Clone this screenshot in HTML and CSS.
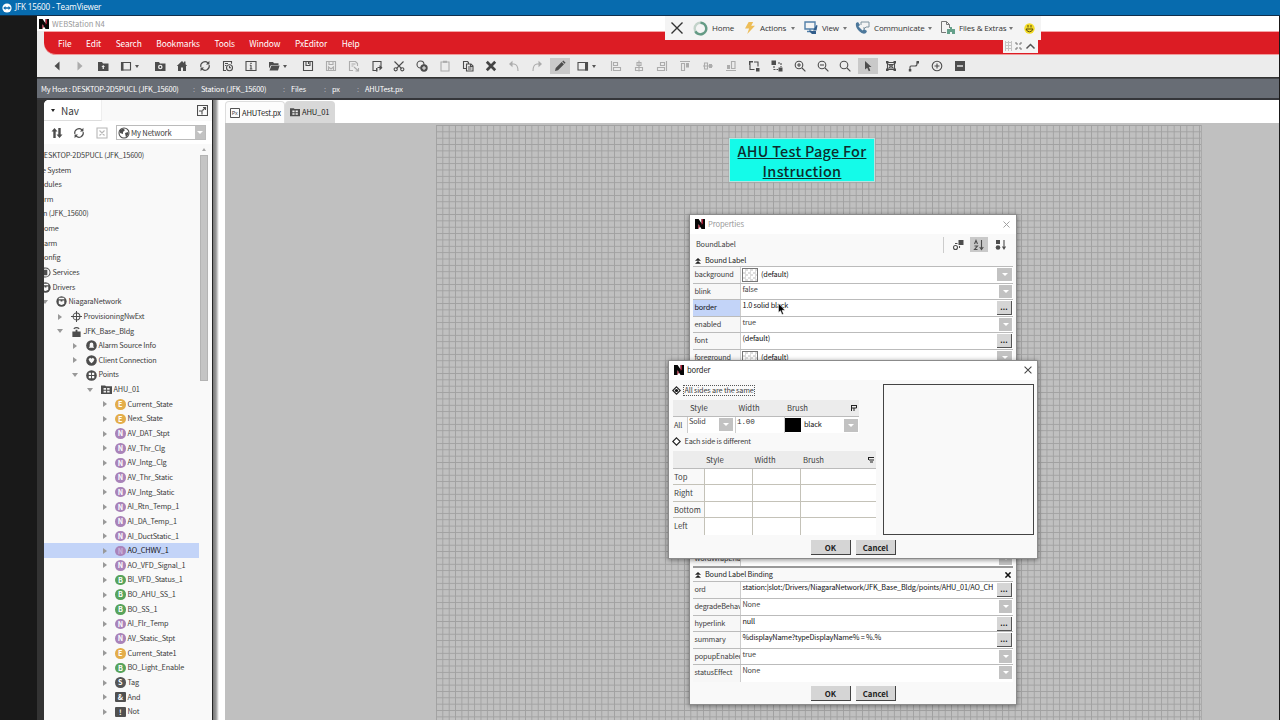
FILE: index.html
```html
<!DOCTYPE html>
<html lang="en">
<head>
    <meta charset="UTF-8">
    <meta name="viewport" content="width=device-width, initial-scale=1.0">
    <title>JFK 15600 - TeamViewer</title>
    <link rel="stylesheet" href="styles.css">
</head>
<body>

    <!-- shared icon shapes -->
    <svg class="sprites">
        <symbol id="n-logo" viewBox="0 0 10 10"><path fill="#080808" d="M0 0h3.6l3 4.6V0H10v10H6.6L3.4 5.2V10H0z"/><path fill="#a3142c" d="M6.6 0H8v4.5L6.6 6zM3.4 5.2 5 7.6 3.4 10z"/></symbol>
        <symbol id="folder-up" viewBox="0 0 12 12"><path d="M1 2h4l1 1.5h5.5V11H1z"/><path fill="#ececec" d="M6.2 5 4.4 7h1.2v2h1.3V7H8z"/></symbol>
        <symbol id="folder-dev" viewBox="0 0 12 12"><path d="M0 1.500h4.500l1 1H12V11H0z"/><path fill="#eee" d="M2.800 4.300h2.700v2H2.800zM6.700 4.300h2.700v2H6.700zM2.800 7.400h2.700v2H2.800zM6.700 7.400h2.700v2H6.700z"/></symbol>
        <symbol id="refresh" viewBox="0 0 12 12"><path class="line" d="M1.8 7A4.3 4.3 0 0 1 9 3M10.2 5A4.3 4.3 0 0 1 3 9"/><path d="M10.4.8v3.6H7zM1.6 11.2V7.6H5z"/></symbol>
        <symbol id="save" viewBox="0 0 12 12"><path class="line" d="M1.5 1.5h9v9h-9zM4 1.5v4h4v-4M6.5 2v2"/></symbol>
        <symbol id="zoom-g" viewBox="0 0 12 12"><circle class="line" cx="5" cy="5" r="3.8"/><path class="line" d="m8 8 3.4 3.4"/></symbol>
        <symbol id="i-net" viewBox="0 0 12 12"><circle cx="6" cy="6" r="5.6"/><path fill="#f9f9f9" d="M3 5h2v1h2V5h2v3.5Q6 11 3 8.5zM3.5 2h5l1 1.5h-7z"/></symbol>
        <symbol id="i-grid" viewBox="0 0 12 12"><circle cx="6" cy="6" r="5.8"/><path fill="#f9f9f9" d="M3 3h2.5v2.5H3zM6.500 3H9v2.500H6.500zM3 6.500h2.500V9H3zM6.500 6.500H9V9H6.500z"/></symbol>
    </svg>

    <div class="titlebar">
        <svg width="10" height="10" viewBox="0 0 10 10"><circle cx="5" cy="5" r="4.6" fill="#fff"/><path fill="#0a6ab0" d="M1.2 5 3.5 3v1.3h3V3l2.3 2-2.3 2V5.7h-3V7z"/></svg>
        <span>JFK 15600 - TeamViewer</span>
    </div>

    <div class="remote">
        <div class="app-title"><svg width="10" height="10"><use href="#n-logo"/></svg><span>WEBStation N4</span></div>
        <div class="menu-wrap">
            <div class="menu">
                <span>File</span><span>Edit</span><span>Search</span><span>Bookmarks</span><span>Tools</span><span>Window</span><span>PxEditor</span><span>Help</span>
            </div>
        </div>

        <div class="toolbar">
            <div class="tool"><svg viewBox="0 0 12 12"><path d="M8.5 1.5v9L3.5 6z"/></svg></div>
            <div class="tool off"><svg viewBox="0 0 12 12"><path d="M3.5 1.5v9L8.5 6z"/></svg></div>
            <div class="tool"><svg><use href="#folder-up"/></svg></div>
            <div class="tool drop"><svg viewBox="0 0 12 12"><path class="line" d="M1.5 2.5h9V10h-9z"/><path d="M1 2h2.5v8.5H1z"/></svg></div>
            <div class="tool"><svg viewBox="0 0 12 12"><path d="M1 2h4l1 1.500h5.500V11H1z"/><circle cx="6.3" cy="7" r="2.3" fill="#ececec"/><path d="M5.5 6h1.600v2H5.500z"/></svg></div>
            <div class="tool"><svg viewBox="0 0 12 12"><path d="M6 1 .8 6H2v5h3V7.500h2V11h3V6h1.200L9.500 4.300V1.500H8v1.400z"/></svg></div>
            <div class="tool"><svg><use href="#refresh"/></svg></div>
            <div class="tool"><svg viewBox="0 0 12 12"><path class="line" d="M4 10.500H1.500v-9h8v2.200M3 3.500h3M3 5.500h1.500"/><circle class="line" cx="7.5" cy="7.7" r="3"/><path class="line" d="M7.500 6v1.800H9"/></svg></div>
            <div class="tool"><svg viewBox="0 0 12 12"><path class="line" d="M1 1.500h10v9H1zM6 5v4M4.800 9h2.500M4.800 5.300H6"/><path d="M5.300 2.700h1.400V4H5.300z"/></svg></div>
            <div class="tool drop"><svg viewBox="0 0 12 12"><path d="M1 2h4l1 1.200h4.500V5H3L1 8.500zM3.400 5.600h8.200L10 10.500H1.500z"/></svg></div>
            <div class="tool"><svg><use href="#save"/></svg></div>
            <div class="tool off"><svg viewBox="0 0 12 12"><path class="line" d="M1.500 1.500h9v9h-9zM4 1.500v3h4v-3M3.500 10V7l2.500 2 2.500-2v3"/></svg></div>
            <div class="tool off"><svg viewBox="0 0 12 12"><path class="line" d="M5 10.500H1.500v-9h6l2 2V6M3.500 4h4M3.500 6h2M6 7l4.500 4M10.500 8v3H7.500"/></svg></div>
            <div class="tool"><svg viewBox="0 0 12 12"><path class="line" d="M5 10.500H2v-9h8v6H6.500"/><path d="m8.500 5 3 2.700-3 2.800zM5 8h1.500v3.500H5z"/></svg></div>
            <div class="tool"><svg viewBox="0 0 12 12"><path class="line" d="m1.500 1.500 7 7M10.500 1.500l-7 7"/><circle class="line" cx="2.7" cy="9.3" r="1.6"/><circle class="line" cx="9.3" cy="9.3" r="1.6"/></svg></div>
            <div class="tool"><svg viewBox="0 0 12 12"><circle class="line" cx="4.5" cy="4.5" r="3.5"/><circle cx="8" cy="8" r="3.7"/><path stroke="#ececec" d="M8 6v4M6 8h4"/></svg></div>
            <div class="tool off"><svg viewBox="0 0 12 12"><path class="line" d="M2 2h8v9H2z"/><path d="M4 .8h4v2H4z"/></svg></div>
            <div class="tool"><svg viewBox="0 0 12 12"><path class="line" d="M4 8.500H1.500v-7h4l1 1v1.500M4.500 4H9l2 2v5H4.500zM6 7h3.500M6 9h3.500M8.500 4v2.500H11"/></svg></div>
            <div class="tool"><svg viewBox="0 0 12 12"><path stroke="#444" stroke-width="2.7" d="m1.800 1.800 8.400 8.400M10.200 1.800l-8.400 8.400"/></svg></div>
            <div class="tool off"><svg viewBox="0 0 12 12"><path class="line" d="M2 4h4q4 .5 4 7"/><path d="M4.500.8v6.400L1 4z"/></svg></div>
            <div class="tool off"><svg viewBox="0 0 12 12"><path class="line" d="M10 4H6q-4 .5-4 7"/><path d="M7.500.8v6.400L11 4z"/></svg></div>
            <div class="tool active"><svg viewBox="0 0 12 12"><path d="m1 11 .7-3 6-6L10 4.300l-6 6zM8.300 1.500l1-1 2.300 2.300-1 1z"/></svg></div>
            <div class="tool drop"><svg viewBox="0 0 12 12"><path class="line" d="M1 2.500h9.500V10H1z"/><path d="M8 2h3v8.500H8z"/></svg></div>
            <div class="tool off"><svg viewBox="0 0 12 12"><path class="line" d="M1.500 1v10M3.500 2.500h4v3h-4zM3.500 7.500h7v3h-7z"/></svg></div>
            <div class="tool off"><svg viewBox="0 0 12 12"><path class="line" d="M6 .5v11M4 2.500h4v3H4zM2.500 7.500h7v3h-7z"/></svg></div>
            <div class="tool off"><svg viewBox="0 0 12 12"><path class="line" d="M10.500 1v10M4.500 2.500h4v3h-4zM1.500 7.500h7v3h-7z"/></svg></div>
            <div class="tool off"><svg viewBox="0 0 12 12"><path class="line" d="M1 1.500h10M2.500 3.500h3v7h-3z"/><path d="M7 3h3v4.500H7z"/></svg></div>
            <div class="tool off"><svg viewBox="0 0 12 12"><path class="line" d="M1 6h10M2.500 3h3v6h-3z"/><path d="M7 4h3v4H7z"/></svg></div>
            <div class="tool off"><svg viewBox="0 0 12 12"><path class="line" d="M1 10.500h10M6.500 1.500H10v7H6.500z"/><path d="M2 5h3v4H2z"/></svg></div>
            <div class="tool"><svg viewBox="0 0 12 12"><path d="M1 1h4v1.500H2.500V5H1zM8 8h3.500v3.500H8z"/><path class="line" d="M2 5v4.500h4.500M6 2h4v4.500"/></svg></div>
            <div class="tool"><svg viewBox="0 0 12 12"><path d="M.5.500h4.500V5H.5zM7.500 7.500h4v4h-4z"/><path class="line" d="M3 6v3.500h4M7 3h3v4" stroke-dasharray="2 1"/></svg></div>
            <div class="tool"><svg viewBox="0 0 12 12"><use href="#zoom-g"/><path class="line" d="M5 3v4M3 5h4"/></svg></div>
            <div class="tool"><svg viewBox="0 0 12 12"><use href="#zoom-g"/><path class="line" d="M3 5h4"/></svg></div>
            <div class="tool"><svg><use href="#zoom-g"/></svg></div>
            <div class="tool active"><svg viewBox="0 0 12 12"><path d="m3 1 6.500 6H6.800l1.500 3.500-1.500.7L5.200 7.800 3 9.500z"/></svg></div>
            <div class="tool"><svg viewBox="0 0 12 12"><path class="line" d="M2.500 2.500h7v7h-7zM4 4.500h4L6.500 6 8 8H4l1.500-2z"/><path d="M1 1h2.500v2.500H1zM8.500 1H11v2.500H8.500zM1 8.500h2.500V11H1zM8.500 8.500H11V11H8.500z"/></svg></div>
            <div class="tool"><svg viewBox="0 0 12 12"><path class="line" d="M2 10V7q0-1 1-1h4q2 0 2-2V2.500"/><path d="M.8 9h2.500v2.500H.8zM8.500 1H11v2.500H8.500z"/></svg></div>
            <div class="tool"><svg viewBox="0 0 12 12"><circle class="line" cx="6" cy="6" r="4.8"/><path class="line" d="M6 3.500v5M3.500 6h5"/></svg></div>
            <div class="tool"><svg viewBox="0 0 12 12"><path d="M1 1h10v10H1z"/><path stroke="#ececec" stroke-width="1.4" d="M3 6h6"/></svg></div>
        </div>

        <div class="pathbar">
            <span class="host">My Host : DESKTOP-2D5PUCL (JFK_15600)</span><i>:</i><span class="station">Station (JFK_15600)</span><i>:</i><span class="files">Files</span><i>:</i><span class="px">px</span><i>:</i><span>AHUTest.px</span>
        </div>

        <div class="workspace">
            <div class="nav">
                <div class="nav-head">
                    <div class="nav-tab"><b class="caret dark"></b>Nav</div>
                    <svg width="11" height="11" viewBox="0 0 11 11"><path class="line" d="M.5.5h10v10H.5zM6 2.500h2.500V5M8.500 2.500l-3 3M2 6h3v3.500"/></svg>
                </div>
                <div class="nav-tools">
                    <svg viewBox="0 0 12 12"><path d="M3.500 1 6.500 4.500H4.700V11H2.300V4.500H.5zM8.500 11l3-3.500H9.700V1H7.300v6.500H5.500z"/></svg>
                    <svg class="nav-refresh"><use href="#refresh"/></svg>
                    <svg class="off nav-close" viewBox="0 0 12 12"><path class="line" d="M1 1h10v10H1zM3.500 3.500l5 5M8.500 3.500l-5 5"/></svg>
                    <div class="select"><svg viewBox="0 0 12 12"><circle class="line" cx="6" cy="6" r="5"/><path d="M2 3 5 1.500 7 3 5 5v2L2 6zM7 6l3-1 .5 2L8 10.500z"/></svg><span>My Network</span><div class="arrow"></div></div>
                </div>
                <div class="tree-wrap">
                    <div class="tree">
                        <div class="row cut c1">DESKTOP-2D5PUCL (JFK_15600)</div>
                        <div class="row cut c2">e System</div>
                        <div class="row cut c3">dules</div>
                        <div class="row cut c4">rm</div>
                        <div class="row cut c5">n (JFK_15600)</div>
                        <div class="row cut c6">ome</div>
                        <div class="row cut c7">arm</div>
                        <div class="row cut c8">onfig</div>
                        <div class="row l0"><svg viewBox="0 0 12 12"><circle class="line" cx="6" cy="6" r="5"/><path d="M4 3h4v6H4z"/></svg>Services</div>
                        <div class="row l0"><svg><use href="#i-net"/></svg>Drivers</div>
                        <div class="row l1"><b class="open"></b><svg><use href="#i-net"/></svg>NiagaraNetwork</div>
                        <div class="row l2"><b></b><svg viewBox="0 0 12 12"><circle class="line" cx="6" cy="6" r="3.7"/><path class="line" d="M6 0v12M0 6h12"/></svg>ProvisioningNwExt</div>
                        <div class="row l2"><b class="open"></b><svg viewBox="0 0 12 12"><path d="M1.500 6h9v6h-9zM5 4h2v2H5z"/><path class="line" d="M3 3q3-2.500 6 0"/></svg>JFK_Base_Bldg</div>
                        <div class="row l3"><b></b><svg viewBox="0 0 12 12"><circle cx="6" cy="6" r="5.8"/><path fill="#f9f9f9" d="M3 8.500 4 7V5q0-2.200 2-2.200T8 5v2l1 1.500z"/></svg>Alarm Source Info</div>
                        <div class="row l3"><b></b><svg viewBox="0 0 12 12"><circle cx="6" cy="6" r="5.8"/><path fill="#f9f9f9" d="M2.800 4.500 4.500 3 6 4l1.500-1 1.700 1.500L8 7 6 9 4 7z"/></svg>Client Connection</div>
                        <div class="row l3"><b class="open"></b><svg><use href="#i-grid"/></svg>Points</div>
                        <div class="row l4"><b class="open"></b><svg><use href="#folder-dev"/></svg>AHU_01</div>
                        <div class="row l5"><b></b><em class="e">E</em>Current_State</div>
                        <div class="row l5"><b></b><em class="e">E</em>Next_State</div>
                        <div class="row l5"><b></b><em class="n">N</em>AV_DAT_Stpt</div>
                        <div class="row l5"><b></b><em class="n">N</em>AV_Thr_Clg</div>
                        <div class="row l5"><b></b><em class="n">N</em>AV_Intg_Clg</div>
                        <div class="row l5"><b></b><em class="n">N</em>AV_Thr_Static</div>
                        <div class="row l5"><b></b><em class="n">N</em>AV_Intg_Static</div>
                        <div class="row l5"><b></b><em class="n">N</em>AI_Rtn_Temp_1</div>
                        <div class="row l5"><b></b><em class="n">N</em>AI_DA_Temp_1</div>
                        <div class="row l5"><b></b><em class="n">N</em>AI_DuctStatic_1</div>
                        <div class="row l5 selected"><b></b><em class="n">N</em>AO_CHWV_1</div>
                        <div class="row l5"><b></b><em class="n">N</em>AO_VFD_Signal_1</div>
                        <div class="row l5"><b></b><em class="b">B</em>BI_VFD_Status_1</div>
                        <div class="row l5"><b></b><em class="b">B</em>BO_AHU_SS_1</div>
                        <div class="row l5"><b></b><em class="b">B</em>BO_SS_1</div>
                        <div class="row l5"><b></b><em class="n">N</em>AI_Flr_Temp</div>
                        <div class="row l5"><b></b><em class="n">N</em>AV_Static_Stpt</div>
                        <div class="row l5"><b></b><em class="e">E</em>Current_State1</div>
                        <div class="row l5"><b></b><em class="b">B</em>BO_Light_Enable</div>
                        <div class="row l5"><b></b><em class="s">S</em>Tag</div>
                        <div class="row l5"><b></b><em class="sq">&amp;</em>And</div>
                        <div class="row l5"><b></b><em class="sq">!</em>Not</div>
                    </div>
                    <div class="scroll"><div class="up"></div><div class="thumb"></div></div>
                </div>
            </div>

            <div class="splitter"></div>

            <div class="editor">
                <div class="tabs">
                    <div class="tab current"><svg viewBox="0 0 11 11"><path class="line" d="M.5.5h10v10H.5z"/><text x="2" y="7.500">Px</text></svg>AHUTest.px</div>
                    <div class="tab"><svg><use href="#folder-dev"/></svg>AHU_01</div>
                </div>
                <div class="canvas">
                    <div class="page"></div>
                </div>
            </div>
        </div>
    </div>

    <!-- label placed on the px page -->
    <div class="px-label">AHU Test Page For<br>Instruction</div>

    <!-- TeamViewer toolbar -->
    <div class="tv-bar">
        <div class="tv-item close"><svg width="12" height="12" viewBox="0 0 12 12"><path stroke="#333" stroke-width="1.4" d="m.5.5 11 11M11.500.5l-11 11"/></svg></div>
        <div class="tv-item home"><svg width="15" height="15" viewBox="0 0 16 16"><g fill="none" stroke-width="2.6"><circle cx="8" cy="8" r="6.2" stroke="#c3d3ca"/><path stroke="#649b85" d="M8 1.800A6.200 6.200 0 1 1 2.500 11"/></g></svg><span>Home</span></div>
        <div class="tv-item actions"><svg width="10" height="12" viewBox="0 0 11 13"><path fill="#edbd58" d="M4 0h5L6.800 4H11L2.500 13l2-6H0z"/></svg><span>Actions</span><b class="caret"></b></div>
        <div class="tv-item view"><svg width="14" height="14" viewBox="0 0 14 14"><path fill="none" stroke="#527fa8" stroke-width="1.4" d="M1 1h10v7H1zM6 8v2M3 10.500h5"/><path fill="#315d8b" d="m12.500 4 1 .5-1 5H9zM5 10h7v3H8z"/></svg><span>View</span><b class="caret"></b></div>
        <div class="tv-item communicate"><svg width="15" height="14" viewBox="0 0 15 14"><path fill="none" stroke="#7f929e" d="M6 4V1h8v5h-3l-2 2V6"/><path fill="#4d789b" d="M1 2 3 1l2 3-1.500 1.500 4 4L9 8l3 2-1 2q-3 2-7-2T1 2z"/></svg><span>Communicate</span><b class="caret"></b></div>
        <div class="tv-item files-extras"><svg width="16" height="14" viewBox="0 0 16 14"><path fill="none" stroke="#777" d="M6 11.500H1.500V.5h5l3 3V7M6.500.5v3h3"/><path fill="#65a08a" d="M7 8h3V6h2v2h3v5h-3v-2h-2v2H7z"/></svg><span>Files &amp; Extras</span><b class="caret"></b></div>
        <svg width="11" height="11" viewBox="0 0 11 11"><circle cx="5.5" cy="5.5" r="5.2" fill="#f3dc25"/><path stroke="#594c10" d="M4 2v2.500M7 2v2.500"/><path fill="none" stroke="#594c10" d="M2 6h7q-1 2.800-3.500 2.800T2 6z"/></svg>
    </div>
    <div class="tv-handle">
        <svg width="35" height="13" viewBox="0 0 35 13"><path stroke="#c4c4c4" d="M2 2.500h7M2 5.500h7M2 8.500h7M2.500 1v10M5.500 1v10M8.500 1v10"/><path fill="none" stroke="#777" d="M12 3h2v2M12 9h2V7M19 3h-2v2M19 9h-2V7"/><path fill="none" stroke="#555" stroke-width="1.5" d="m23.500 8.500 4-4 4 4"/></svg>
    </div>

    <div class="dialog properties">
        <div class="dialog-title faded"><svg width="10" height="10"><use href="#n-logo"/></svg><span>Properties</span><svg class="x" width="7" height="7" viewBox="0 0 7 7"><path d="m.5.5 6 6M6.500.5l-6 6"/></svg></div>
        <div class="props-head">
            <span>BoundLabel</span>
            <div class="props-tools">
                <div class="ptool"><svg viewBox="0 0 12 12"><path d="M6.500 1h5v5h-5z"/><circle class="line" cx="3.5" cy="8.5" r="2"/><path class="line" d="M3 4.500h2.500M7.500 7v2"/></svg></div>
                <div class="ptool active"><svg viewBox="0 0 12 12"><path class="line" d="M1.500 5 3 1.500 4.500 5M1.500 7h3l-3 3.500h3M8.500 1v9M6.700 8l1.800 2.500L10.300 8"/></svg></div>
                <div class="ptool"><svg viewBox="0 0 12 12"><path d="M1 1h4v4H1z"/><circle cx="3" cy="8.5" r="2.3"/><path class="line" d="M9 1v8M7.500 7.500 9 10l1.500-2.500"/></svg></div>
            </div>
        </div>
        <div class="section"><svg width="6" height="6" viewBox="0 0 6 6"><path d="m0 2.800 3-2.800 3 2.800zM0 5.800 3 3l3 2.800z"/></svg><span>Bound Label</span></div>
        <div class="props">
            <div class="prop mid"><label>background</label><div class="value"><i class="swatch"></i>(default)</div><div class="arrow wide"></div></div>
            <div class="prop soft"><label>blink</label><div class="value">false</div><div class="arrow"></div></div>
            <div class="prop picked"><label>border</label><div class="value">1.0 solid black</div><div class="dots">...</div></div>
            <div class="prop soft"><label>enabled</label><div class="value">true</div><div class="arrow"></div></div>
            <div class="prop"><label>font</label><div class="value">(default)</div><div class="dots">...</div></div>
            <div class="prop mid"><label>foreground</label><div class="value"><i class="swatch"></i>(default)</div><div class="arrow wide"></div></div>
        </div>
        <div class="props-rest">
            <div class="prop soft"><label>wordWrapEna</label><div class="value"></div><div class="arrow"></div></div>
        </div>
        <div class="section second"><svg width="6" height="6" viewBox="0 0 6 6"><path d="m0 2.800 3-2.800 3 2.800zM0 5.800 3 3l3 2.800z"/></svg><span>Bound Label Binding</span><svg class="x bold" width="6" height="6" viewBox="0 0 7 7"><path d="m.5.5 6 6M6.500.5l-6 6"/></svg></div>
        <div class="props">
            <div class="prop"><label>ord</label><div class="value">station:|slot:/Drivers/NiagaraNetwork/JFK_Base_Bldg/points/AHU_01/AO_CH</div><div class="dots">...</div></div>
            <div class="prop soft"><label>degradeBehav</label><div class="value">None</div><div class="arrow"></div></div>
            <div class="prop"><label>hyperlink</label><div class="value">null</div><div class="dots">...</div></div>
            <div class="prop"><label>summary</label><div class="value">%displayName?typeDisplayName% = %.%</div><div class="dots">...</div></div>
            <div class="prop soft"><label>popupEnabled</label><div class="value">true</div><div class="arrow"></div></div>
            <div class="prop soft"><label>statusEffect</label><div class="value">None</div><div class="arrow"></div></div>
        </div>
        <div class="buttons"><button>OK</button><button>Cancel</button></div>
    </div>

    <svg class="pointer" width="8" height="12" viewBox="0 0 8 12"><path stroke="#fff" stroke-width=".5" d="M.5.5v9l2-1.800L4 11.500l1.500-.6L4 7.300h3z"/></svg>

    <div class="dialog border-dialog">
        <div class="dialog-title"><svg width="10" height="10"><use href="#n-logo"/></svg><span>border</span><svg class="x" width="8" height="8" viewBox="0 0 7 7"><path d="m.5.5 6 6M6.500.5l-6 6"/></svg></div>
        <div class="border-body">
            <div class="form">
                <div class="radio"><svg width="9" height="9" viewBox="0 0 8 8"><path fill="#fff" stroke="#222" d="m4 .7 3.300 3.300L4 7.300.7 4z"/><circle cx="4" cy="4" r="1.4" fill="#111"/></svg><span class="focus">All sides are the same</span></div>
                <div class="grid-head one"><span>Style</span><span>Width</span><span>Brush</span><svg width="6" height="6" viewBox="0 0 6 6"><path fill="none" stroke="#222" d="M0 .5h6M.5 0v6M0 3h5.500V1M3 3v3"/></svg></div>
                <div class="all-row"><span>All</span><div class="cell style">Solid<div class="arrow wide"></div></div><div class="cell width">1.00</div><div class="cell brush"><i></i>black<div class="arrow wide"></div></div></div>
                <div class="radio each"><svg width="9" height="9" viewBox="0 0 8 8"><path fill="#fff" stroke="#222" d="m4 .7 3.300 3.300L4 7.300.7 4z"/></svg><span>Each side is different</span></div>
                <div class="grid-head two"><span>Style</span><span>Width</span><span>Brush</span><svg width="6" height="6" viewBox="0 0 6 6"><path fill="none" stroke="#222" d="M0 .5h6M1 3h5M.5 0v3M2 5h3"/></svg></div>
                <div class="side"><span>Top</span><i></i><i></i><i></i></div>
                <div class="side"><span>Right</span><i></i><i></i><i></i></div>
                <div class="side"><span>Bottom</span><i></i><i></i><i></i></div>
                <div class="side"><span>Left</span><i></i><i></i><i></i></div>
            </div>
            <div class="preview"></div>
        </div>
        <div class="buttons"><button>OK</button><button>Cancel</button></div>
    </div>

</body>
</html>
```
FILE: styles.css
```css
* {
    box-sizing: border-box;
}

body {
    margin: 0;
    width: 1280px;
    height: 720px;
    overflow: hidden;
    position: relative;
    background-color: #191919;
    font-family: "Noto Sans CJK SC", "Noto Sans", sans-serif;
    font-size: 7.3px;
    letter-spacing: -0.17px;
    line-height: 1;
    color: #3c3c3c;
    white-space: nowrap;
}

svg {
    display: block;
    flex-shrink: 0;
    fill: #4d4d4d;
}

.sprites {
    position: absolute;
    width: 0;
    height: 0;
}

.line {
    fill: none;
    stroke: #4d4d4d;
    stroke-width: 1.1;
}

i,
em {
    font-style: normal;
}

.titlebar {
    height: 16px;
    display: flex;
    align-items: center;
    gap: 3px;
    padding-left: 2px;
    background-color: #076bae;
    border-bottom: 1px solid #102f4c;
    color: #fff;
    font-family: "Open Sans", sans-serif;
    font-size: 8.1px;
}

.remote {
    margin-left: 37px;
    width: 1242px;
    height: 704px;
    display: flex;
    flex-direction: column;
    background-color: #333;
}

.app-title {
    height: 15px;
    display: flex;
    align-items: center;
    gap: 3px;
    padding-left: 2px;
    background-color: #fff;
    color: #999;
    font-size: 7.6px;
    letter-spacing: 0;
}

.menu-wrap {
    height: 24px;
    padding-left: 7px;
    background-color: #ececec;
}

.menu {
    height: 24px;
    display: flex;
    align-items: center;
    gap: 14.5px;
    padding: 1px 0 0 14px;
    background-color: #dc1c24;
    border-top: 1px solid #f6a5a6;
    border-bottom: 1px solid #f09a9b;
    border-bottom-left-radius: 12px;
    color: #fff;
    font-size: 8.4px;
    letter-spacing: -0.1px;
}

.toolbar {
    height: 23px;
    display: flex;
    align-items: center;
    padding-left: 8.5px;
    background-color: #ececec;
    border-bottom: 1px solid #333;
}

.tool {
    width: 22.9px;
    height: 17px;
    padding: 2.5px 0 0 5.5px;
    flex-shrink: 0;
}

.tool svg {
    width: 12px;
    height: 12px;
}

.tool.drop {
    width: 33.9px;
    display: flex;
    gap: 3px;
}

.tool.drop::after {
    content: "";
    margin-top: 5px;
    width: 0;
    height: 0;
    border: 2px solid transparent;
    border-top: 3px solid #555;
}

.tool.active,
.ptool.active {
    background: linear-gradient(#c9c9c9, #c9c9c9) center / 20px 16px no-repeat;
}

.off {
    opacity: 0.4;
}

.pathbar {
    height: 22px;
    display: flex;
    align-items: center;
    padding-left: 4px;
    background-color: #686d75;
    border-top: 1px solid #45474b;
    border-bottom: 2px solid #35363a;
    color: #fff;
    font-size: 7.4px;
}

.pathbar i {
    width: 8px;
    color: #b9bbbe;
}

.pathbar span {
    flex-shrink: 0;
}

.host { width: 152px; }
.station { width: 82px; }
.files { width: 33px; }
.px { width: 25px; }

.workspace {
    flex: 1;
    min-height: 0;
    display: flex;
    padding-left: 7px;
}

.nav {
    width: 168px;
    display: flex;
    flex-direction: column;
    background-color: #fff;
    border-top-left-radius: 5px;
}

.nav-head {
    height: 21px;
    display: flex;
    justify-content: space-between;
    align-items: center;
    padding-right: 4px;
    background-color: #f9f9f9;
    border-top-left-radius: 5px;
}

.nav-tab {
    width: 58px;
    height: 21px;
    display: flex;
    align-items: center;
    gap: 6px;
    padding: 1px 0 0 7px;
    background-color: #fff;
    border-bottom: 1px solid #ddd;
    border-right: 1px solid #eee;
    border-top-left-radius: 5px;
    font-size: 10px;
    letter-spacing: 0;
}

.caret {
    border: 2px solid transparent;
    border-top: 3px solid #777;
    border-bottom: 0;
}

.caret.dark {
    border-top-color: #222;
}

.nav-tools {
    height: 23px;
    display: flex;
    align-items: center;
    padding: 0 6px 0 7px;
}

.nav-tools svg {
    width: 12px;
    height: 12px;
}

.nav-refresh { margin-left: 10px; }
.nav-close { margin-left: 11px; }

.select {
    width: 91px;
    height: 15px;
    margin-left: 8px;
    display: flex;
    align-items: center;
    gap: 1px;
    padding-left: 1px;
    border: 1px solid #bbb;
    font-size: 7.6px;
}

.select .arrow {
    margin-left: auto;
    width: 10px;
}

.arrow {
    width: 13px;
    height: 13px;
    flex-shrink: 0;
    display: flex;
    align-items: center;
    justify-content: center;
    background-color: #c2c2c2;
}

.arrow::after {
    content: "";
    border: 3px solid transparent;
    border-top: 3px solid #fff;
    border-bottom: 0;
}

.tree-wrap {
    flex: 1;
    min-height: 0;
    display: flex;
    background-color: #f9f9f9;
    overflow: hidden;
}

.tree {
    width: 155px;
    padding-top: 4.2px;
}

.row {
    height: 14.65px;
    display: flex;
    align-items: center;
}

.row svg {
    width: 11px;
    height: 11px;
    margin-right: 1.5px;
}

.row b {
    width: 4px;
    margin-right: 9px;
    border: 3.5px solid transparent;
    border-left: 4px solid #999;
    border-right: 0;
}

.row b.open {
    width: 6px;
    margin-right: 8px;
    margin-left: -1px;
    border: 3px solid transparent;
    border-top: 4px solid #999;
    border-bottom: 0;
}

.row em {
    width: 10.5px;
    height: 10.5px;
    margin-right: 2px;
    margin-left: -1px;
    border-radius: 50%;
    color: #fff;
    font-size: 7.2px;
    font-weight: bold;
    line-height: 10px;
    text-align: center;
}

.row em.e { background-color: #e3ad4a; }
.row em.n { background-color: #a983b9; }
.row em.b { background-color: #58a35c; }
.row em.s { background-color: #555; }
.row em.sq { background-color: #505050; border-radius: 1px; }

.row.selected {
    background-color: #c3d4f8;
    color: #111;
}

.row.selected em {
    color: #c9b3dc;
}

.c1 { margin-left: -5px; }
.c2 { margin-left: -2px; }
.c5 { margin-left: -1px; }
.l0 { margin-left: -4px; }
.l1 { margin-left: -1px; }
.l2 { padding-left: 14px; }
.l3 { padding-left: 29px; }
.l4 { padding-left: 44px; }
.l5 { padding-left: 59px; }

.scroll {
    width: 10px;
    padding: 4px 1px 0;
}

.scroll .up {
    height: 3px;
    margin: 0 2px 4px;
    border: 2px solid transparent;
    border-top: 0;
    border-bottom: 3px solid #aaa;
}

.scroll .thumb {
    height: 226px;
    background-color: #c4c4c4;
    border: 1px solid #b3b3b3;
}

.splitter {
    width: 13px;
    background: linear-gradient(90deg, #222 1px, #777 1px, #999 4px, #ddd 6px, #fff 7px);
}

.editor {
    flex: 1;
    display: flex;
    flex-direction: column;
}

.tabs {
    height: 23px;
    display: flex;
    align-items: flex-end;
    background-color: #fff;
}

.tab {
    height: 22px;
    display: flex;
    align-items: center;
    gap: 2px;
    padding: 0 6px 0 5px;
    background-color: #d8d8d8;
    border-radius: 4px 4px 0 0;
    font-size: 7.6px;
    color: #222;
}

.tab.current {
    width: 60px;
    padding-left: 4px;
    background-color: #fcfcfc;
    border: 1px solid #ddd;
    border-bottom: 0;
}

.tab svg {
    width: 10px;
    height: 10px;
}

.tab text {
    font-size: 6px;
    fill: #444;
}

.canvas {
    flex: 1;
    min-height: 0;
    padding: 2px 0 0 211px;
    background-color: #c0c0c0;
}

.page {
    width: 766px;
    height: 100%;
    background-image:
        linear-gradient(90deg, #a1a1a1 1px, transparent 1px),
        linear-gradient(#a1a1a1 1px, transparent 1px);
    background-size: 6.37px 6.37px;
    border-right: 1px solid #aaa;
}

.px-label {
    position: absolute;
    left: 729px;
    top: 138px;
    width: 146px;
    height: 44px;
    padding-top: 2px;
    background-color: #14fbe9;
    border: 1px solid #b5e5e0;
    color: #0d2d2d;
    font-size: 14.4px;
    font-weight: 500;
    line-height: 20px;
    letter-spacing: 0.3px;
    text-align: center;
    text-decoration: underline;
}

.tv-bar {
    position: absolute;
    left: 665px;
    top: 16px;
    width: 376px;
    height: 24px;
    display: flex;
    align-items: center;
    padding-left: 6px;
    background-color: #f4f4f4;
    color: #333;
    font-family: "Open Sans", sans-serif;
    font-size: 8px;
    letter-spacing: -0.15px;
}

.tv-item {
    display: flex;
    align-items: center;
    gap: 4px;
}

.close { width: 22px; }
.home { width: 52px; }
.actions { width: 59px; gap: 5px; }
.view { width: 51px; }
.communicate { width: 85px; }
.files-extras { width: 84px; gap: 3px; }

.tv-handle {
    position: absolute;
    left: 1003px;
    top: 40px;
    width: 35px;
    height: 13px;
    background-color: #f4f4f4;
}

.dialog {
    position: absolute;
    display: flex;
    flex-direction: column;
    background-color: #f9f9f9;
    border: 1px solid #8b8b8b;
    box-shadow: 0 1px 5px rgba(0, 0, 0, 0.45);
}

.properties {
    left: 689px;
    top: 214px;
    width: 328px;
    height: 491px;
}

.border-dialog {
    left: 668px;
    top: 360px;
    width: 370px;
    height: 199px;
}

.dialog-title {
    height: 19px;
    display: flex;
    align-items: center;
    gap: 3px;
    padding: 0 5px 1px;
    background-color: #fff;
    color: #222;
    font-size: 7.6px;
    letter-spacing: -0.1px;
}

.faded {
    color: #999;
    padding-right: 6px;
}

.x {
    margin-left: auto;
    stroke: #444;
    stroke-width: 0.9;
}

.faded .x {
    stroke: #999;
}

.x.bold {
    stroke: #111;
    stroke-width: 1.8;
}

.props-head {
    height: 21px;
    display: flex;
    align-items: center;
    justify-content: space-between;
    padding: 0 5px 0 6px;
}

.props-tools {
    display: flex;
    border-left: 1px solid #ccc;
    padding-left: 3px;
}

.ptool {
    width: 21.5px;
    height: 16px;
    padding: 2px 5px;
}

.ptool.active {
    background-size: 18px 15px;
}

.ptool svg {
    width: 12px;
    height: 12px;
}

.section {
    height: 11px;
    display: flex;
    align-items: center;
    gap: 4px;
    padding: 0 6px 0 5px;
    color: #222;
}

.section svg {
    fill: #222;
}

.section.second {
    height: 15px;
    margin-left: 3px;
    margin-right: 3px;
    padding: 0 2px;
    border-top: 2px solid #999;
}

.props {
    margin: 0 3px;
    border-top: 1px solid #bbb;
}

.props-rest {
    margin: 185px 3px 0;
    height: 15px;
}

.prop {
    height: 16.57px;
    display: flex;
    align-items: flex-start;
    background-color: #fff;
    border-bottom: 1px solid #bbb;
    color: #111;
}

.props .prop:last-child {
    border-bottom: 0;
}

.prop label {
    width: 48px;
    height: 100%;
    padding: 4px 0 0 1.5px;
    flex-shrink: 0;
    overflow: hidden;
    border-right: 1px solid #ccc;
    background-color: #f7f7f7;
    color: #3c3c3c;
}

.prop .value {
    flex: 1;
    height: 14px;
    padding: 2px 0 0 1.5px;
    overflow: hidden;
}

.prop.soft .value {
    color: #444;
}

.prop.mid .value {
    height: 100%;
    display: flex;
    align-items: center;
    gap: 3px;
    padding: 0 0 0 1px;
}

.prop .arrow {
    margin: 1px 1px 0 2px;
}

.prop .arrow.wide {
    width: 15px;
}

.prop.picked label {
    background-color: #c3d4f8;
    color: #111;
}

.swatch {
    width: 16px;
    height: 14px;
    border: 1px solid #777;
    background: conic-gradient(#ddd 25%, #fff 0 50%, #ddd 0 75%, #fff 0) 0 0 / 5px 5px;
}

.dots {
    width: 15px;
    height: 14px;
    margin: 1px 1px 0 2px;
    flex-shrink: 0;
    background-color: #d5d5d5;
    border-right: 1px solid #555;
    border-bottom: 1px solid #555;
    font-weight: bold;
    letter-spacing: 0.2px;
    text-align: center;
    line-height: 13px;
}

.buttons {
    display: flex;
    justify-content: center;
    gap: 5px;
    margin-top: auto;
    padding: 0 0 3px 1px;
}

button {
    width: 40px;
    height: 15px;
    padding: 0;
    background-color: #d5d5d5;
    border: 0;
    border-right: 1px solid #444;
    border-bottom: 1px solid #444;
    color: #222;
    font-family: inherit;
    font-size: 7.8px;
    font-weight: bold;
    line-height: 13px;
}

.pointer {
    position: absolute;
    left: 778px;
    top: 303px;
    fill: #000;
}

.border-body {
    display: flex;
    justify-content: space-between;
    padding: 4px 3px 0 4px;
}

.form {
    width: 203px;
}

.radio {
    height: 13px;
    display: flex;
    align-items: center;
    gap: 2px;
    margin-left: -1px;
}

.radio span {
    padding: 0.5px;
    border: 1px solid transparent;
}

.radio .focus {
    border: 1px dotted #555;
}

.grid-head {
    height: 17px;
    display: flex;
    align-items: center;
    background-color: #ececec;
    border-bottom: 1px solid #bbb;
    font-size: 7.7px;
    letter-spacing: 0;
}

.grid-head span {
    width: 48.5px;
}

.grid-head svg {
    margin-left: auto;
}

.grid-head.one {
    width: 186px;
    margin-top: 3px;
    padding: 0 2px 0 17px;
}

.grid-head.two {
    height: 18px;
    margin-top: 3px;
    padding: 0 2px 0 33px;
}

.all-row {
    width: 186px;
    height: 16px;
    display: flex;
    background-color: #fff;
}

.all-row > span {
    width: 14px;
    padding: 5px 0 0 1px;
    background-color: #f9f9f9;
}

.cell {
    display: flex;
    justify-content: space-between;
    padding: 1px 2px 0 1px;
    border-left: 1px solid #ccc;
}

.style { width: 48px; }

.width {
    width: 49px;
    padding-top: 2px;
    font-family: "Liberation Mono", monospace;
    font-size: 7.6px;
    color: #333;
}

.brush {
    flex: 1;
    align-items: center;
    justify-content: flex-start;
    gap: 3px;
    padding: 0 1px 0 0;
    color: #111;
}

.brush i {
    width: 16px;
    height: 14px;
    background-color: #000;
}

.brush .arrow {
    margin-left: auto;
}

.arrow.wide {
    width: 14px;
}

.each {
    margin-top: 2px;
}

.side {
    height: 16.4px;
    display: flex;
    background-color: #fff;
    border-bottom: 1px solid #c4c2b8;
    font-size: 7.7px;
    letter-spacing: 0;
}

.side:last-child {
    border-bottom: 0;
}

.side span {
    width: 31px;
    padding: 4px 0 0 1px;
    background-color: #f9f9f9;
}

.side i {
    width: 48px;
    border-left: 1px solid #c4c2b8;
}

.preview {
    width: 151px;
    height: 151px;
    border: 1px solid #444;
    background-color: #f9f9f9;
}
```
